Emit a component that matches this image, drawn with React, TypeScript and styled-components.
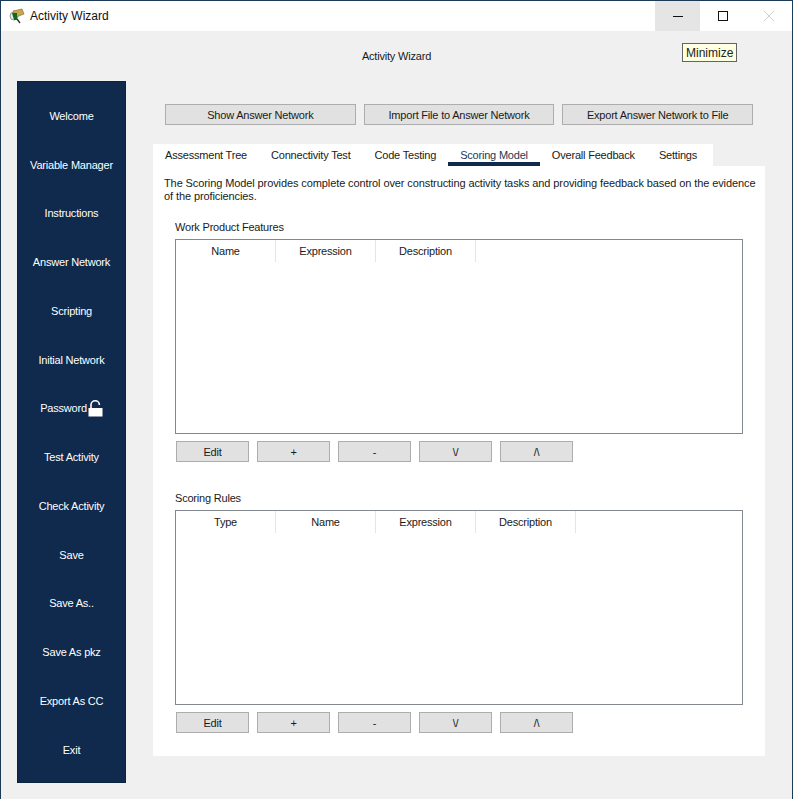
import { createGlobalStyle } from "styled-components";
import styled from "styled-components";

const GlobalStyle = createGlobalStyle`
  html, body {
    margin: 0;
    padding: 0;
    background: #f0f0f0;
  }
  * {
    box-sizing: border-box;
  }
`;

const Window = styled.div`
  position: relative;
  width: 793px;
  height: 799px;
  overflow: hidden;
  background: #f0f0f0;
  border: 1px solid #1b3a57;
  border-bottom: none;
  font-family: "Liberation Sans", Arial, sans-serif;
  font-size: 11px;
  letter-spacing: -0.2px;
  color: #1a1a1a;
`;

const TitleBar = styled.div`
  display: flex;
  align-items: center;
  height: 30px;
  background: #fff;
`;

const AppIcon = styled.svg`
  width: 16px;
  height: 16px;
  margin-left: 8px;
`;

const TitleText = styled.div`
  margin-left: 5px;
  flex: 1;
  font-size: 12px;
  letter-spacing: 0;
  color: #111;
`;

const WinButton = styled.div<{ $hover?: boolean }>`
  display: flex;
  align-items: center;
  justify-content: center;
  width: 45px;
  height: 30px;
  margin-right: ${(props) => (props.$hover ? "0" : "1px")};
  background: ${(props) => (props.$hover ? "#e5e5e5" : "transparent")};
`;

const Tooltip = styled.div`
  position: absolute;
  left: 681px;
  top: 42px;
  height: 19px;
  padding: 0 3px;
  line-height: 18px;
  font-size: 12px;
  letter-spacing: 0;
  background: #ffffe1;
  border: 1px solid #646464;
  color: #222;
`;

const Caption = styled.div`
  height: 50px;
  line-height: 50px;
  text-align: center;
  color: #1a1a1a;
`;

const Body = styled.div`
  display: flex;
  align-items: flex-start;
  padding-left: 16px;
`;

const Sidebar = styled.div`
  width: 109px;
  height: 702px;
  padding-top: 9.5px;
  background: #0f2a4d;
  border: 1px solid #0c2340;
`;

const NavItem = styled.div`
  display: flex;
  align-items: center;
  justify-content: center;
  height: 48.75px;
  color: #fff;
`;

const LockIcon = styled.svg`
  width: 15px;
  height: 17px;
  margin-left: 1px;
`;

const Main = styled.div`
  width: 612px;
  margin-left: 27px;
`;

const TopButtons = styled.div`
  display: flex;
  gap: 8px;
  margin: 23px 0 0 12px;
`;

const TopButton = styled.div`
  display: flex;
  align-items: center;
  justify-content: center;
  width: 190.67px;
  height: 21px;
  background: #e1e1e1;
  border: 1px solid #adadad;
  color: #1a1a1a;
`;

const Tabs = styled.div`
  display: flex;
  width: 560px;
  height: 22px;
  margin-top: 19px;
  background: #fff;
`;

const Tab = styled.div<{ $active?: boolean }>`
  position: relative;
  height: 22px;
  padding: 0 12px;
  line-height: 22px;
  white-space: nowrap;
  color: ${(props) => (props.$active ? "#1b3a57" : "#1a1a1a")};
  &::after {
    content: "";
    display: ${(props) => (props.$active ? "block" : "none")};
    position: absolute;
    left: 0;
    right: 0;
    bottom: 0;
    height: 4px;
    background: #0f2a4d;
  }
`;

const Panel = styled.div`
  height: 590px;
  padding: 11px 8px 0 11px;
  background: #fff;
`;

const Intro = styled.p`
  margin: 0;
  line-height: 13px;
  letter-spacing: -0.1px;
  color: #1a1a1a;
`;

const Section = styled.div`
  margin: 0 0 0 11px;
`;

const SectionLabel = styled.div<{ $top: number }>`
  height: 14px;
  margin-top: ${(props) => props.$top}px;
  line-height: 14px;
  color: #1a1a1a;
`;

const ListView = styled.div`
  width: 568px;
  height: 195px;
  margin-top: 5px;
  border: 1px solid #828790;
  background: #fff;
`;

const ListHeader = styled.div`
  display: flex;
  height: 22px;
`;

const ColumnHead = styled.div`
  width: 100px;
  line-height: 22px;
  text-align: center;
  color: #1a1a1a;
  border-right: 1px solid #e5e5e5;
`;

const ActionRow = styled.div`
  display: flex;
  gap: 8px;
  margin: 7px 0 0 1px;
`;

const ActionButton = styled.div`
  display: flex;
  align-items: center;
  justify-content: center;
  width: 73px;
  height: 21px;
  background: #e1e1e1;
  border: 1px solid #adadad;
  color: #1a1a1a;
`;

const navItems = [
  "Welcome",
  "Variable Manager",
  "Instructions",
  "Answer Network",
  "Scripting",
  "Initial Network",
  "Password",
  "Test Activity",
  "Check Activity",
  "Save",
  "Save As..",
  "Save As pkz",
  "Export As CC",
  "Exit",
];

const tabs = [
  "Assessment Tree",
  "Connectivity Test",
  "Code Testing",
  "Scoring Model",
  "Overall Feedback",
  "Settings",
];

const actions = ["Edit", "+", "-", "\\/", "/\\"];

function ListSection({
  label,
  columns,
  top,
}: {
  label: string;
  columns: string[];
  top: number;
}) {
  return (
    <Section>
      <SectionLabel $top={top}>{label}</SectionLabel>
      <ListView>
        <ListHeader>
          {columns.map((col) => (
            <ColumnHead key={col}>{col}</ColumnHead>
          ))}
        </ListHeader>
      </ListView>
      <ActionRow>
        {actions.map((action) => (
          <ActionButton key={action}>{action}</ActionButton>
        ))}
      </ActionRow>
    </Section>
  );
}

function App() {
  return (
    <Window>
      <GlobalStyle />
      <TitleBar>
        <AppIcon viewBox="0 0 16 16">
          <circle cx="5" cy="8" r="4" fill="#e8e8e8" stroke="#999" />
          <path d="M8 11l3 4" stroke="#333" strokeWidth="1.4" />
          <path d="M4 3l9-2 2 5-8 3z" fill="#c9a64e" stroke="#7a6420" strokeWidth="0.6" />
          <path d="M3 5h5v7H5z" fill="#0b6b1e" />
        </AppIcon>
        <TitleText>Activity Wizard</TitleText>
        <WinButton $hover>
          <svg width="10" height="10" viewBox="0 0 10 10">
            <path d="M0 5.5h10" stroke="#111" strokeWidth="1" />
          </svg>
        </WinButton>
        <WinButton>
          <svg width="10" height="10" viewBox="0 0 10 10">
            <rect x="0.5" y="0.5" width="9" height="9" fill="none" stroke="#111" />
          </svg>
        </WinButton>
        <WinButton>
          <svg width="10" height="10" viewBox="0 0 10 10">
            <path d="M0 0l10 10M10 0L0 10" stroke="#cfcfcf" strokeWidth="1" />
          </svg>
        </WinButton>
      </TitleBar>
      <Tooltip>Minimize</Tooltip>
      <Caption>Activity Wizard</Caption>
      <Body>
        <Sidebar>
          {navItems.map((item) => (
            <NavItem key={item}>
              {item}
              {item === "Password" && (
                <LockIcon viewBox="0 0 15 17">
                  <path d="M3 8V5a4.2 4.2 0 0 1 8.4 0" fill="none" stroke="#fff" strokeWidth="1.6" />
                  <rect x="0.5" y="8" width="14" height="8.5" fill="#fff" />
                </LockIcon>
              )}
            </NavItem>
          ))}
        </Sidebar>
        <Main>
          <TopButtons>
            <TopButton>Show Answer Network</TopButton>
            <TopButton>Import File to Answer Network</TopButton>
            <TopButton>Export Answer Network to File</TopButton>
          </TopButtons>
          <Tabs>
            {tabs.map((tab) => (
              <Tab key={tab} $active={tab === "Scoring Model"}>
                {tab}
              </Tab>
            ))}
          </Tabs>
          <Panel>
            <Intro>
              The Scoring Model provides complete control over constructing activity tasks and
              providing feedback based on the evidence of the proficiencies.
            </Intro>
            <ListSection
              label="Work Product Features"
              columns={["Name", "Expression", "Description"]}
              top={17}
            />
            <ListSection
              label="Scoring Rules"
              columns={["Type", "Name", "Expression", "Description"]}
              top={29}
            />
          </Panel>
        </Main>
      </Body>
    </Window>
  );
}

export default App;
